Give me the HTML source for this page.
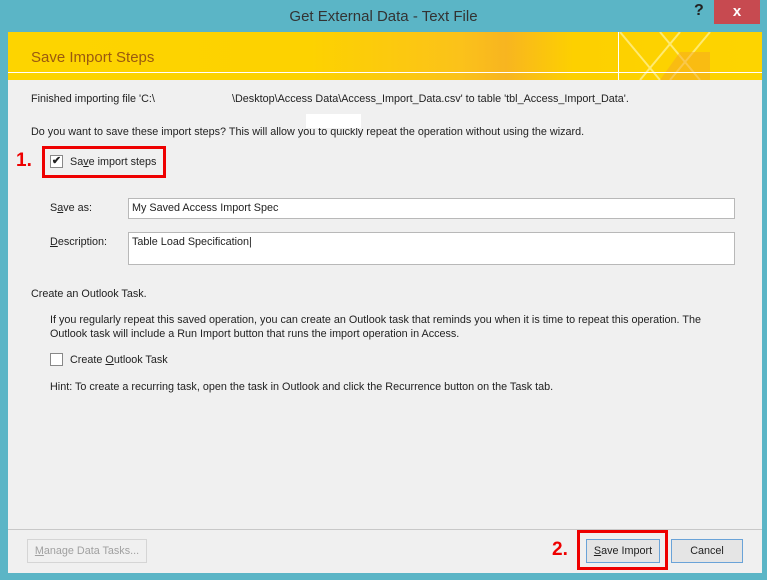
<!DOCTYPE html>
<html><head><style>
*{margin:0;padding:0;box-sizing:border-box}
body{width:767px;height:580px;background:#5bb5c6;font-family:"Liberation Sans",sans-serif;font-size:10.8px;color:#222;position:relative;overflow:hidden}
.a{position:absolute}
.title{top:8px;left:0;width:767px;text-align:center;font-size:15px;color:#333}
.close{left:714px;top:0;width:46px;height:24px;background:#c74a50;color:#fff;text-align:center;font-size:15px;line-height:24px;font-weight:bold}
.q{left:694px;top:2px;font-size:16px;color:#222;font-weight:bold}
.win{left:8px;top:32px;width:754px;height:541px;background:#f0f0f0}
.hdr{left:8px;top:32px;width:754px;height:48px;background:linear-gradient(90deg,#fdd400 0%,#fdd200 40%,#fbc21a 60%,#f8b520 66%,#fdd000 75%,#fdd400 100%)}
.cb{width:13px;height:13px;border:1px solid #888;background:#fff}
.inp{background:#fff;border:1px solid #b8b8b8;padding:3px 3px;font-size:10.8px}
.btn{border:1px solid #adadad;background:#e5e5e5;text-align:center;line-height:22px;height:24px}
.red{border:3px solid #e00;}
.num{color:#e00;font-weight:bold;font-size:19px}
</style></head><body>
<div class="a title">Get External Data - Text File</div>
<div class="a q">?</div>
<div class="a close">x</div>
<div class="a win"></div>
<div class="a hdr"></div>
<svg class="a" style="left:560px;top:32px" width="202" height="48"><g stroke="#fff3a0" stroke-width="2" fill="none" opacity=".7"><path d="M60 0 L100 48 M120 0 L80 48 M100 0 L140 48 M150 0 L110 48"/></g><path d="M120 20 L150 20 L150 48 L100 48Z" fill="#f5a623" opacity=".5"/></svg>
<div class="a" style="left:8px;top:72px;width:754px;height:1px;background:#fff"></div>
<div class="a" style="left:618px;top:32px;width:1px;height:48px;background:#fff"></div>
<div class="a" style="left:31px;top:49px;font-size:15px;color:#9a5a10">Save Import Steps</div>
<div class="a" style="left:31px;top:93px">Finished importing file 'C:\</div>
<div class="a" style="left:232px;top:93px">\Desktop\Access Data\Access_Import_Data.csv' to table 'tbl_Access_Import_Data'.</div>
<div class="a" style="left:31px;top:126px">Do you want to save these import steps? This will allow you to quickly repeat the operation without using the wizard.</div>
<div class="a" style="left:306px;top:114px;width:55px;height:14px;background:#fff"></div>
<div class="a num" style="left:16px;top:150px">1.</div>
<div class="a red" style="left:42px;top:146px;width:124px;height:32px"></div>
<div class="a cb" style="left:50px;top:155px;font-size:11px;line-height:11px;text-align:center;font-weight:bold">✔</div>
<div class="a" style="left:70px;top:156px">Sa<u>v</u>e import steps</div>
<div class="a" style="left:50px;top:202px">S<u>a</u>ve as:</div>
<div class="a inp" style="left:128px;top:198px;width:607px;height:21px">My Saved Access Import Spec</div>
<div class="a" style="left:50px;top:236px"><u>D</u>escription:</div>
<div class="a inp" style="left:128px;top:232px;width:607px;height:33px">Table Load Specification|</div>
<div class="a" style="left:31px;top:288px">Create an Outlook Task.</div>
<div class="a" style="left:50px;top:313px;line-height:14px">If you regularly repeat this saved operation, you can create an Outlook task that reminds you when it is time to repeat this operation. The<br>Outlook task will include a Run Import button that runs the import operation in Access.</div>
<div class="a cb" style="left:50px;top:353px"></div>
<div class="a" style="left:70px;top:354px">Create <u>O</u>utlook Task</div>
<div class="a" style="left:50px;top:381px">Hint: To create a recurring task, open the task in Outlook and click the Recurrence button on the Task tab.</div>
<div class="a" style="left:8px;top:529px;width:754px;height:1px;background:#c8c8c8"></div>
<div class="a btn" style="left:27px;top:539px;width:120px;color:#a0a0a0;background:#f0f0f0;border-color:#d5d5d5"><u>M</u>anage Data Tasks...</div>
<div class="a num" style="left:552px;top:539px">2.</div>
<div class="a red" style="left:577px;top:530px;width:91px;height:40px"></div>
<div class="a btn" style="left:586px;top:539px;width:74px;border-color:#6aa3d8"><u>S</u>ave Import</div>
<div class="a btn" style="left:671px;top:539px;width:72px;border-color:#6aa3d8">Cancel</div>
</body></html>
